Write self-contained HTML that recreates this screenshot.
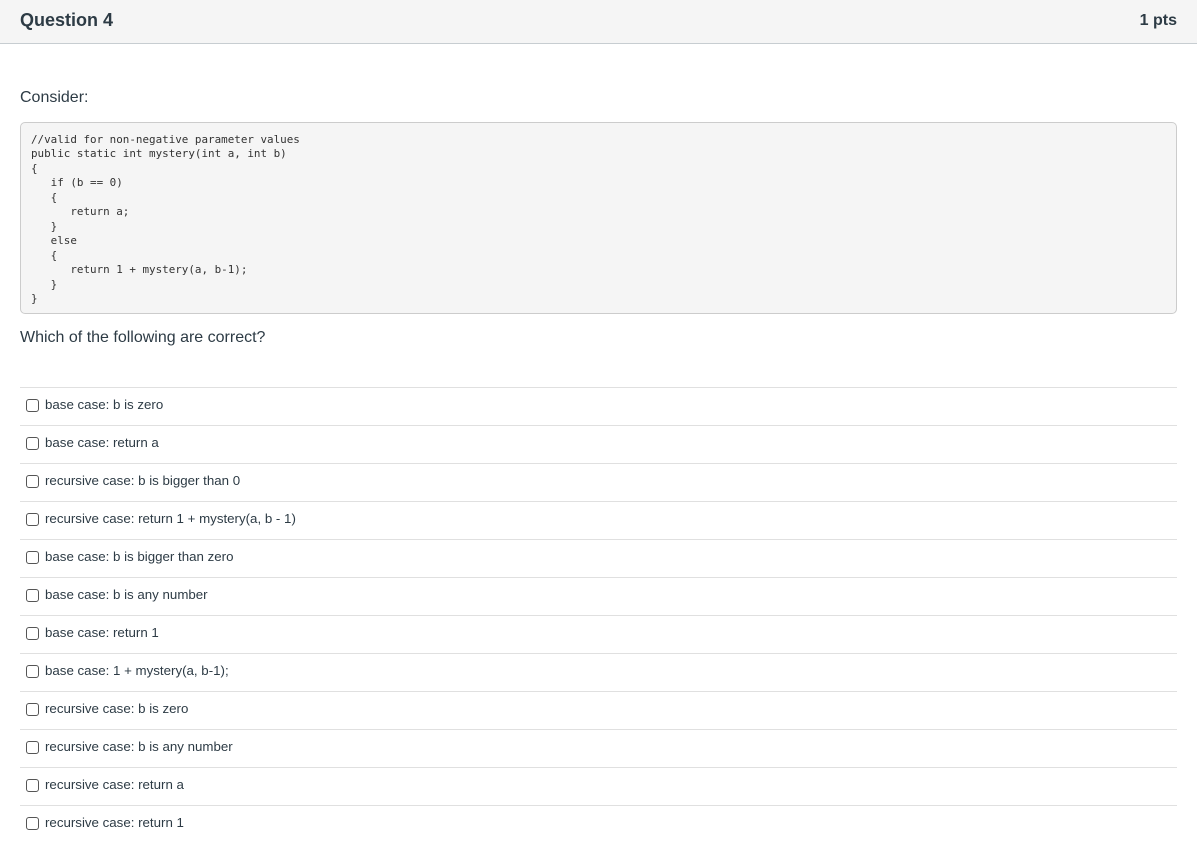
<!DOCTYPE html>
<html><head><style>
body{margin:0;width:1197px;height:861px;background:#fff;font-family:"Liberation Sans",sans-serif;color:#2d3b45;overflow:hidden;position:relative}
.hdr{position:absolute;left:0;top:0;width:1197px;height:44px;background:#f5f5f5;border-bottom:1px solid #c7cdd1;box-sizing:border-box}
.hdr .t{position:absolute;left:20px;top:10px;font-size:18px;font-weight:bold;color:#2d3b45}
.hdr .p{position:absolute;right:20px;top:12px;font-size:16px;font-weight:bold;color:#2d3b45}
.txt{position:absolute;left:20px;font-size:16px}
.code{position:absolute;left:20px;top:122px;width:1157px;height:192px;box-sizing:border-box;background:#f5f5f5;border:1px solid #ccc;border-radius:5px;padding:10px 0 0 10px;font-family:"DejaVu Sans Mono","Liberation Mono",monospace;font-size:10.9px;line-height:14.45px;white-space:pre;color:#333}
.opt{position:absolute;left:20px;width:1157px;height:38px;border-top:1px solid #e0e0e0;box-sizing:border-box;font-size:13.3px}
.opt .cb{position:absolute;left:6px;top:11px;width:11px;height:11px;border:1px solid #555;border-radius:3px;background:#fff}
.opt span{position:absolute;left:25px;top:9px}
</style></head><body>
<div class="hdr"><div class="t">Question 4</div><div class="p">1 pts</div></div>
<div class="txt" style="top:89px">Consider:</div>
<div class="code">//valid for non-negative parameter values
public static int mystery(int a, int b)
{
   if (b == 0)
   {
      return a;
   }
   else
   {
      return 1 + mystery(a, b-1);
   }
}</div>
<div class="txt" style="top:329px">Which of the following are correct?</div>
<div class="opt" style="top:387px"><div class="cb"></div><span>base case: b is zero</span></div>
<div class="opt" style="top:425px"><div class="cb"></div><span>base case: return a</span></div>
<div class="opt" style="top:463px"><div class="cb"></div><span>recursive case: b is bigger than 0</span></div>
<div class="opt" style="top:501px"><div class="cb"></div><span>recursive case: return 1 + mystery(a, b - 1)</span></div>
<div class="opt" style="top:539px"><div class="cb"></div><span>base case: b is bigger than zero</span></div>
<div class="opt" style="top:577px"><div class="cb"></div><span>base case: b is any number</span></div>
<div class="opt" style="top:615px"><div class="cb"></div><span>base case: return 1</span></div>
<div class="opt" style="top:653px"><div class="cb"></div><span>base case: 1 + mystery(a, b-1);</span></div>
<div class="opt" style="top:691px"><div class="cb"></div><span>recursive case: b is zero</span></div>
<div class="opt" style="top:729px"><div class="cb"></div><span>recursive case: b is any number</span></div>
<div class="opt" style="top:767px"><div class="cb"></div><span>recursive case: return a</span></div>
<div class="opt" style="top:805px"><div class="cb"></div><span>recursive case: return 1</span></div>
</body></html>
